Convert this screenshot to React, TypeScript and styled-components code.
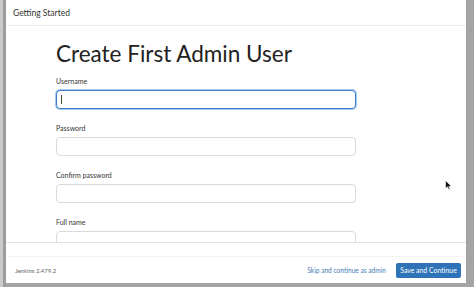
import React from "react";
import styled, { createGlobalStyle } from "styled-components";

const GlobalStyle = createGlobalStyle`
  html, body {
    margin: 0;
    padding: 0;
    overflow: hidden;
    background: #a4a4a4;
  }
  * { box-sizing: border-box; }
`;

const Stage = styled.div`
  position: relative;
  width: 474px;
  height: 287px;
  display: flex;
  padding: 0 8px 4px 6px;
  background: linear-gradient(to right, #c9c9c9 0 3px, #9d9d9d 3px 6px, #a4a4a4 6px);
  font-family: "Lato", "Noto Sans", sans-serif;
  color: #333;
`;

const Modal = styled.div`
  flex: 1;
  background: #fff;
  display: flex;
  flex-direction: column;
  overflow: hidden;
`;

const Header = styled.div`
  height: 26px;
  flex: none;
  display: flex;
  align-items: center;
  padding-left: 7px;
  border-bottom: 1px solid #ededed;
  font-size: 8.5px;
  color: #333;
`;

const Body = styled.div`
  flex: 1;
  overflow: hidden;
  padding-left: 50px;
  border-bottom: 1px solid #e2e2e2;
`;

const Title = styled.h1`
  margin: 13px 0 7px;
  font-size: 22.5px;
  line-height: 30px;
  font-weight: 400;
  color: #222;
`;

const Field = styled.div`
  display: flex;
  flex-direction: column;
  margin-bottom: 14px;
`;

const Label = styled.label`
  font-size: 7px;
  line-height: 10px;
  color: #333;
  margin-bottom: 4px;
`;

const Input = styled.div<{ $focused?: boolean }>`
  position: relative;
  width: 300px;
  height: 19px;
  border-radius: 4px;
  border: 1px solid ${(p) => (p.$focused ? "#3c7fd0" : "#d9d9d9")};
  box-shadow: ${(p) => (p.$focused ? "0 0 0 1px #a9c8ee" : "none")};
  background: #fff;
`;

const Caret = styled.span`
  position: absolute;
  left: 4px;
  top: 4px;
  width: 1px;
  height: 9px;
  background: #444;
`;

const Spacer = styled.div`
  height: 13px;
  flex: none;
`;

const Footer = styled.div`
  height: 27px;
  flex: none;
  display: flex;
  align-items: center;
  padding: 0 5px 0 9px;
  border-top: 1px solid #f3f3f3;
`;

const Version = styled.span`
  font-size: 6px;
  color: #666;
  flex: 1;
`;

const SkipLink = styled.a`
  font-size: 6.6px;
  color: #3f7bb8;
  text-decoration: none;
  margin-right: 10px;
`;

const PrimaryButton = styled.button`
  width: 65px;
  height: 15px;
  padding: 0;
  border: none;
  border-radius: 2px;
  background: #2e72b7;
  color: #fff;
  font-family: inherit;
  font-size: 6.9px;
`;

const Pointer = styled.svg`
  position: absolute;
  left: 445px;
  top: 180px;
`;

const fields = [
  { label: "Username", focused: true },
  { label: "Password" },
  { label: "Confirm password" },
  { label: "Full name" },
];

export default function App() {
  return (
    <>
      <GlobalStyle />
      <Stage>
        <Modal>
          <Header>Getting Started</Header>
          <Body>
            <Title>Create First Admin User</Title>
            {fields.map((f) => (
              <Field key={f.label}>
                <Label>{f.label}</Label>
                <Input $focused={f.focused}>{f.focused && <Caret />}</Input>
              </Field>
            ))}
          </Body>
          <Spacer />
          <Footer>
            <Version>Jenkins 2.479.2</Version>
            <SkipLink href="#">Skip and continue as admin</SkipLink>
            <PrimaryButton>Save and Continue</PrimaryButton>
          </Footer>
        </Modal>
        <Pointer width="7" height="11" viewBox="0 0 7 11">
          <path d="M0.5 0.5 L0.5 8.5 L2.5 6.8 L3.8 9.8 L5 9.3 L3.8 6.4 L6.3 6.3 Z" fill="#111" stroke="#fff" strokeWidth="0.6" />
        </Pointer>
      </Stage>
    </>
  );
}
